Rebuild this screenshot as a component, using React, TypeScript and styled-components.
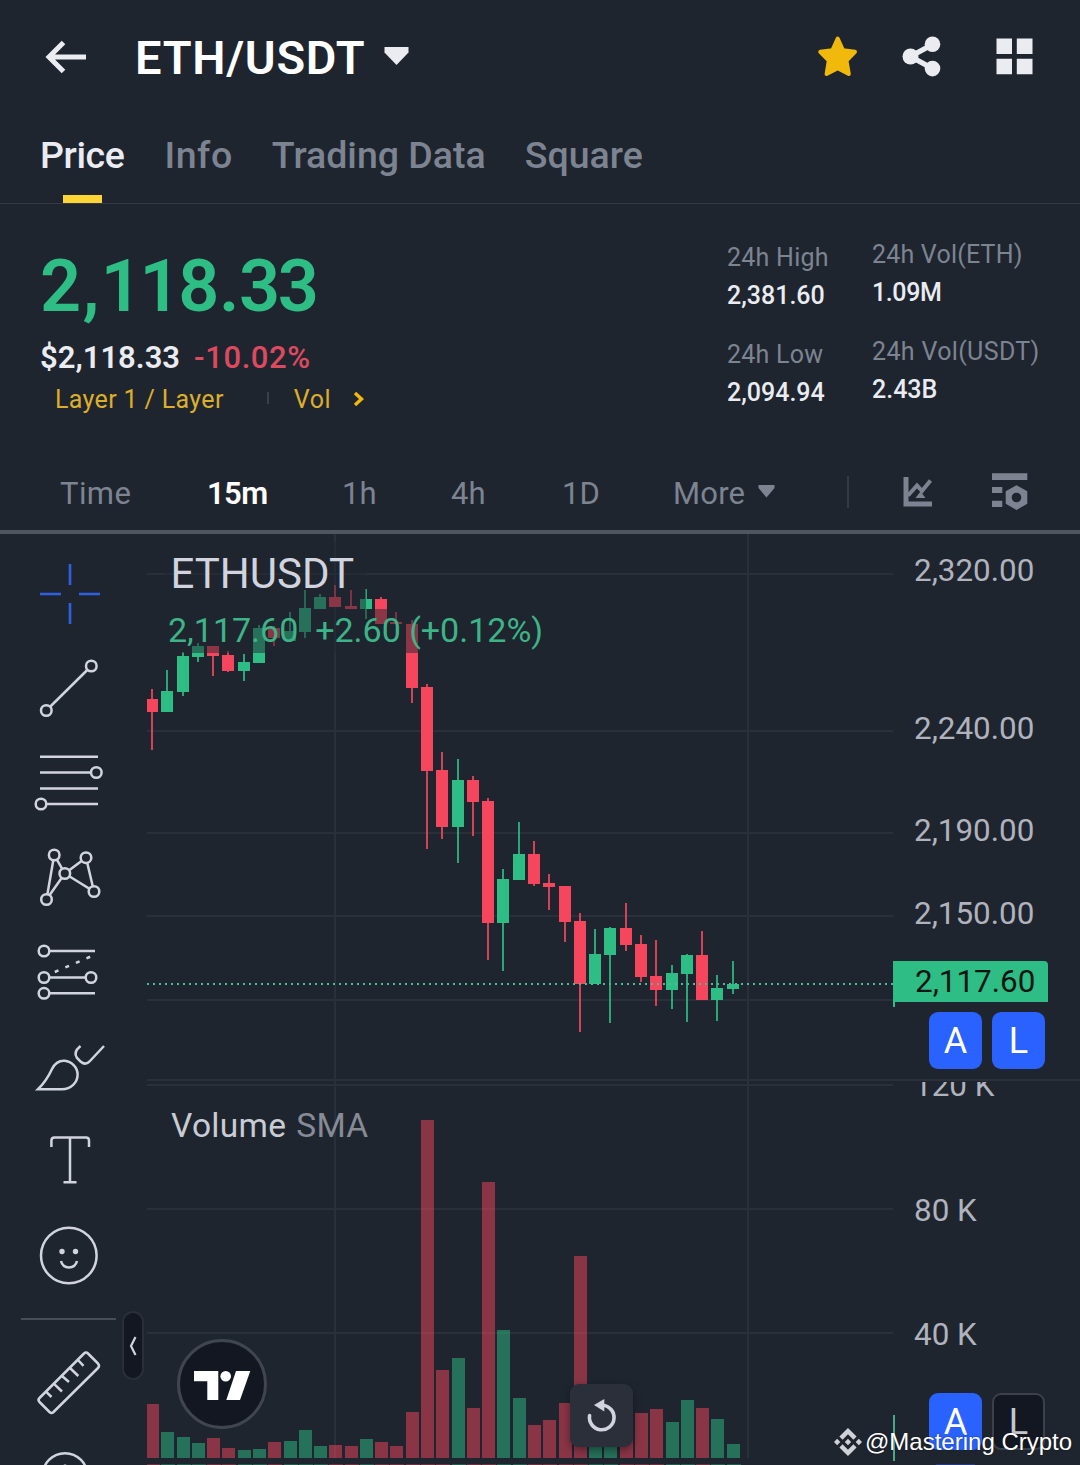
import React from "react";
import styled, { createGlobalStyle } from "styled-components";
import { SiBinance } from "react-icons/si";

const c = {
  bg: "#1f252f",
  text: "#eaecf2",
  muted: "#7d8491",
  green: "#2ebd85",
  red: "#f6465d",
  gold: "#dcae2b",
  line: "#2a3039",
  icon: "#d1d4de",
  ink: "#131722",
  blue: "#2962ff",
};

const GlobalStyle = createGlobalStyle`
  html, body { margin: 0; padding: 0; background: ${c.bg}; }
  * { box-sizing: border-box; }
`;

const Screen = styled.main`
  display: flex;
  flex-direction: column;
  width: 1080px;
  height: 1465px;
  overflow: hidden;
  background: ${c.bg};
  color: ${c.text};
  font-family: Roboto, "Liberation Sans", sans-serif;
  white-space: nowrap;
`;

/* ---------- header ---------- */

const Header = styled.header`
  display: flex;
  align-items: center;
  height: 114px;
  padding: 0 44px 0 44px;
`;

const Pair = styled.h1`
  margin: 2px 0 0 47px;
  font-size: 47px;
  font-weight: 600;
  line-height: 56px;
  letter-spacing: 0.7px;
  color: #fff;
`;

const HeaderCaret = styled.svg`
  margin: 0 0 2px 19px;
`;

const HeaderActions = styled.div`
  display: flex;
  align-items: center;
  margin: 0 0 2px auto;
`;

const ActionIcon = styled.svg<{ $gap?: number }>`
  margin-left: ${(p) => p.$gap ?? 0}px;
`;

const Tabs = styled.nav`
  display: flex;
  gap: 40px;
  height: 90px;
  padding: 17px 0 0 40px;
  border-bottom: 1px solid #343a45;
`;

const Tab = styled.span<{ $active?: boolean; $spacing?: number; $pull?: number }>`
  position: relative;
  font-size: 37.5px;
  line-height: 48px;
  font-weight: 500;
  letter-spacing: ${(p) => p.$spacing ?? 0}px;
  margin-left: ${(p) => p.$pull ?? 0}px;
  color: ${(p) => (p.$active ? c.text : c.muted)};
  &::after {
    content: "";
    display: ${(p) => (p.$active ? "block" : "none")};
    position: absolute;
    left: 23px;
    top: 64px;
    width: 39px;
    height: 8px;
    background: #fcd535;
  }
`;

/* ---------- price summary ---------- */

const Summary = styled.section`
  display: flex;
  height: 250px;
`;

const PriceColumn = styled.div`
  display: flex;
  flex-direction: column;
  width: 727px;
  padding: 41px 0 0 40px;
`;

const LastPrice = styled.div`
  font-size: 72px;
  font-weight: 600;
  line-height: 84px;
  letter-spacing: -2.4px;
  color: ${c.green};
`;

const Separator = styled.span`
  display: inline-block;
  width: 22px;
  text-align: center;
`;

const ChangeRow = styled.div`
  display: flex;
  gap: 14px;
  margin-top: 11px;
  font-size: 31px;
  line-height: 36px;
  font-weight: 600;
`;

const Change = styled.span`
  color: #dd4a5f;
  font-weight: 500;
  letter-spacing: 0.6px;
`;

const TagRow = styled.div`
  display: flex;
  align-items: center;
  margin-top: 9px;
  padding-left: 15px;
  font-size: 25px;
  line-height: 30px;
  color: ${c.gold};
`;

const Tag = styled.span<{ $spacing?: number }>`
  letter-spacing: ${(p) => p.$spacing ?? 0}px;
`;

const TagDivider = styled.i`
  width: 2px;
  height: 12px;
  margin: 0 25px 4px 43px;
  background: #3a404b;
`;

const TagChevron = styled.svg`
  margin: 0 0 3px 22px;
`;

const StatColumn = styled.div<{ $width: number; $top: number }>`
  display: flex;
  flex-direction: column;
  gap: 22px;
  width: ${(p) => p.$width}px;
  padding-top: ${(p) => p.$top}px;
`;

const Stat = styled.div`
  height: 75px;
`;

const StatLabel = styled.div<{ $spacing?: number }>`
  font-size: 25px;
  line-height: 30px;
  letter-spacing: ${(p) => p.$spacing ?? 0.25}px;
  color: ${c.muted};
`;

const StatValue = styled.div<{ $spacing?: number }>`
  margin-top: 8px;
  font-size: 25px;
  line-height: 30px;
  font-weight: 500;
  letter-spacing: ${(p) => p.$spacing ?? 0}px;
  color: ${c.text};
`;

/* ---------- interval bar ---------- */

const IntervalBar = styled.nav`
  display: grid;
  grid-template-columns: 147px 135px 109px 111px 111px 174px 56px 88px 40px;
  align-items: center;
  height: 80px;
  padding: 0 0 0 60px;
  border-bottom: 4px solid #515560;
`;

const Interval = styled.span<{ $active?: boolean; $spacing?: number }>`
  display: flex;
  align-items: center;
  gap: 13px;
  padding-top: 4px;
  font-size: 31px;
  line-height: 38px;
  font-weight: ${(p) => (p.$active ? 600 : 400)};
  letter-spacing: ${(p) => p.$spacing ?? 0.2}px;
  color: ${(p) => (p.$active ? "#fff" : c.muted)};
`;

const MoreCaret = styled.svg`
  margin-bottom: 6px;
`;

const BarDivider = styled.i`
  width: 2px;
  height: 32px;
  background: #343a45;
`;

/* ---------- chart ---------- */

const ChartArea = styled.section`
  display: grid;
  grid-template-columns: 147px 933px;
  height: 931px;
`;

const Toolbar = styled.aside`
  position: relative;
  display: flex;
  flex-direction: column;
  padding: 13px 0 0 21px;
  overflow: hidden;
`;

const ToolSvg = styled.svg`
  flex: none;
  width: 96px;
  height: 94.5px;
  fill: none;
  stroke: ${c.icon};
  stroke-width: 2.5;
`;

const ToolDivider = styled.hr`
  flex: none;
  width: 95px;
  height: 2px;
  margin: 15px 0 16px;
  border: 0;
  background: #474c56;
`;

const CollapseHandle = styled.button`
  position: absolute;
  left: 122px;
  top: 777px;
  display: flex;
  align-items: center;
  justify-content: center;
  width: 22px;
  height: 69px;
  padding: 0;
  border: 2px solid #292e38;
  border-radius: 11px;
  background: ${c.ink};
`;

const Plot = styled.div`
  position: relative;
  overflow: hidden;
`;

const ChartSvg = styled.svg`
  display: block;
  font-family: Roboto, "Liberation Sans", sans-serif;
`;

const SymbolLegend = styled.div`
  position: absolute;
  left: 16px;
  top: 8px;
  width: 203px;
  height: 67px;
  padding: 7px 0 0 7.5px;
  background: rgba(31, 37, 47, 0.5);
  color: #d1d4de;
  font-size: 42px;
  line-height: 50px;
`;

const QuoteLegend = styled.div`
  position: absolute;
  left: 16px;
  top: 75px;
  width: 386px;
  height: 44px;
  padding: 1px 0 0 5px;
  background: rgba(31, 37, 47, 0.5);
  color: #3db488;
  font-size: 34px;
  line-height: 40px;
  white-space: pre;
`;

const VolumeLegend = styled.div`
  position: absolute;
  left: 24px;
  top: 572px;
  display: flex;
  gap: 10px;
  font-size: 33.5px;
  line-height: 40px;
  letter-spacing: 0.3px;
  color: #c9ccd5;
`;

const Dim = styled.span`
  color: #868b96;
`;

const ScaleButtons = styled.div<{ $top: number }>`
  position: absolute;
  left: 782px;
  top: ${(p) => p.$top}px;
  display: flex;
  gap: 10px;
`;

const ScaleButton = styled.button<{ $off?: boolean }>`
  width: 53px;
  height: 57px;
  padding: 2px 0 0;
  border: ${(p) => (p.$off ? "2px solid #3b404b" : "0")};
  border-radius: 9px;
  background: ${(p) => (p.$off ? c.ink : c.blue)};
  color: ${(p) => (p.$off ? "#c3c6cf" : "#fff")};
  font: 400 36px / 51px Roboto, "Liberation Sans", sans-serif;
`;

const Badge = styled.div`
  position: absolute;
  left: 30px;
  top: 805px;
  width: 90px;
  height: 90px;
  border: 3px solid #41454f;
  border-radius: 50%;
  background: ${c.ink};
`;

const ResetButton = styled.button`
  position: absolute;
  left: 423px;
  top: 850px;
  width: 63px;
  height: 63px;
  padding: 0;
  border: 0;
  border-radius: 9px;
  background: #2a2f3a;
  box-shadow: 0 3px 8px rgba(0, 0, 0, 0.4);
`;

const Watermark = styled.div`
  position: absolute;
  left: 687px;
  top: 893px;
  display: flex;
  align-items: center;
  gap: 3px;
  color: #fff;
  font: 24px / 30px "Liberation Sans", Arial, sans-serif;
  text-shadow: 0 0 2px rgba(0, 0, 0, 0.5);
`;

type Candle = [up: 0 | 1, high: number, top: number, bottom: number, low: number, volume: number];

const candles: Candle[] = [
  [0, 689, 699, 712, 750, 1404],
  [1, 670, 691, 712, 712, 1432],
  [1, 652, 656, 692, 696, 1437],
  [1, 643, 646, 657, 662, 1443],
  [0, 646, 646, 656, 676, 1438],
  [0, 651, 655, 671, 672, 1448],
  [1, 654, 662, 671, 681, 1450],
  [1, 625, 628, 663, 663, 1449],
  [0, 626, 628, 638, 646, 1442],
  [1, 612, 631, 641, 641, 1441],
  [1, 590, 608, 632, 638, 1430],
  [1, 594, 597, 609, 609, 1446],
  [0, 585, 597, 607, 607, 1445],
  [0, 590, 606, 609, 609, 1446],
  [1, 589, 599, 609, 619, 1439],
  [0, 597, 599, 624, 624, 1442],
  [0, 612, 622, 624, 624, 1446],
  [0, 620, 624, 688, 703, 1412],
  [0, 684, 687, 771, 849, 1120],
  [0, 752, 770, 827, 839, 1370],
  [1, 759, 780, 827, 863, 1358],
  [0, 776, 780, 802, 836, 1408],
  [0, 798, 801, 923, 960, 1182],
  [1, 869, 879, 923, 971, 1330],
  [1, 822, 854, 880, 880, 1398],
  [0, 841, 854, 884, 886, 1425],
  [0, 874, 883, 887, 910, 1420],
  [0, 886, 886, 922, 942, 1403],
  [0, 913, 921, 984, 1032, 1256],
  [1, 929, 954, 984, 984, 1425],
  [1, 927, 928, 955, 1023, 1425],
  [0, 903, 928, 945, 951, 1425],
  [0, 935, 944, 977, 982, 1413],
  [0, 940, 976, 990, 1006, 1409],
  [1, 965, 973, 990, 1009, 1422],
  [1, 954, 955, 974, 1022, 1400],
  [0, 931, 955, 1000, 1000, 1408],
  [1, 975, 988, 1000, 1021, 1419],
  [1, 961, 984, 989, 994, 1444],
];

const centerOf = (i: number) => Math.round(152 + i * 15.28);

const axisLabels: [string, number][] = [
  ["2,320.00", 581],
  ["2,240.00", 739],
  ["2,190.00", 841],
  ["2,150.00", 924],
  ["80 K", 1221],
  ["40 K", 1345],
];

function Chart() {
  return (
    <ChartSvg width="933" height="931" viewBox="147 534 933 931">
      <defs>
        <clipPath id="volume-pane">
          <rect x="893" y="1082" width="187" height="383" />
        </clipPath>
      </defs>
      <g fill={c.line}>
        {[573, 730, 832, 915, 999, 1084, 1208, 1332].map((y) => (
          <rect key={y} x="147" y={y} width="746" height="2" />
        ))}
        <rect x="334" y="534" width="2" height="924" />
        <rect x="747" y="534" width="2" height="924" />
        <rect x="147" y="1079" width="933" height="2" />
      </g>
      {candles.map(([up, high, top, bottom, low, volume], i) => {
        const x = centerOf(i);
        const fill = up ? c.green : c.red;
        return (
          <g key={i} fill={fill}>
            <rect x={x - 6} y={volume} width="13" height={1458 - volume} opacity="0.5" />
            <rect x={x - 6} y="1464" width="14" height="1" opacity="0.35" />
            <rect x={x - 1} y={high} width="2" height={low - high} opacity="0.85" />
            <rect x={x - 6} y={top} width="12" height={bottom - top} />
          </g>
        );
      })}
      <line x1="147" x2="893" y1="984" y2="984" stroke="#4fb894" strokeWidth="2" strokeDasharray="2 4" />
      <g fill="#b0b3bd" fontSize="31.4">
        {axisLabels.map(([label, y]) => (
          <text key={label} x="914" y={y}>
            {label}
          </text>
        ))}
        <text x="914" y="1096" clipPath="url(#volume-pane)">
          120 K
        </text>
      </g>
      <path d="M893 961H1044a4 4 0 0 1 4 4V1002H895V1007H893Z" fill={c.green} />
      <text x="915" y="992" fontSize="31.4" fill="#0b1512">
        2,117.60
      </text>
      <rect x="893" y="1415" width="2" height="46" fill="#4aa882" />
      <rect x="936" y="1464" width="39" height="1" fill="#233a80" />
    </ChartSvg>
  );
}

const Node = ({ x, y }: { x: number; y: number }) => <circle cx={x} cy={y} r="5.3" fill={c.bg} />;

function Tools() {
  return (
    <Toolbar>
      <ToolSvg viewBox="21 547 96 94.5">
        <path d="M70 564V585M70 603V624M40 594H61M79 594H100" stroke="#2f60e4" strokeWidth="2.6" />
      </ToolSvg>
      <ToolSvg viewBox="21 641.5 96 94.5">
        <path d="M46.3 710L91.3 665.5" />
        <Node x={46.3} y={710} />
        <Node x={91.3} y={665.5} />
      </ToolSvg>
      <ToolSvg viewBox="21 736 96 94.5">
        <path d="M40 756.7H98M40 772.5H92M40 788.5H98M44 804H98" />
        <Node x={96.3} y={772.5} />
        <Node x={41} y={804} />
      </ToolSvg>
      <ToolSvg viewBox="21 830.5 96 94.5">
        <path d="M46.5 899L54.2 854.5L64.8 873L46.5 899M64.8 873L86 857.2L94 891Z" />
        <Node x={54.2} y={854.5} />
        <Node x={86} y={857.2} />
        <Node x={64.8} y={873} />
        <Node x={46.5} y={899} />
        <Node x={94} y={891} />
      </ToolSvg>
      <ToolSvg viewBox="21 925 96 94.5">
        <path d="M44 951H95M44 977.5H91M44 993.3H95" />
        <path d="M54.8 972L93 955.5" strokeDasharray="4 7.5" />
        <Node x={44} y={951} />
        <Node x={44} y={977.5} />
        <Node x={91} y={977.5} />
        <Node x={44} y={993.3} />
      </ToolSvg>
      <ToolSvg viewBox="21 1019.5 96 94.5">
        <path d="M38 1088.7C46 1081 49 1075 52 1068.5C55 1062.5 59.5 1060 64.5 1060.3C72 1061 77.6 1067 77.6 1074C77.6 1082 71 1088.7 62 1088.7Z" />
        <path d="M80.5 1045.5C75 1050 74 1053.5 77 1057.5L80.5 1061C84 1064 87 1064 90 1060.5L104 1045.5" />
      </ToolSvg>
      <ToolSvg viewBox="21 1114 96 94.5">
        <path d="M51.4 1147V1140.5Q51.4 1137.4 54.5 1137.4H86Q89 1137.4 89 1140.5V1147M70 1137.4V1182M63.5 1182.3H76.5" />
      </ToolSvg>
      <ToolSvg viewBox="21 1208.5 96 94.5">
        <circle cx="68.8" cy="1255" r="27.8" />
        <circle cx="62" cy="1251" r="2.7" fill={c.icon} stroke="none" />
        <circle cx="75.5" cy="1251" r="2.7" fill={c.icon} stroke="none" />
        <path d="M61 1260.5C63 1269 75 1269 77 1260.5" />
      </ToolSvg>
      <ToolDivider />
      <ToolSvg viewBox="21 1336 96 94.5">
        <path
          strokeLinejoin="round"
          d="M84 1353.5Q86 1351.5 88 1353.5L98 1363.5Q100 1365.8 98 1368L53.5 1412Q51.5 1414 49.5 1412L39.5 1402Q37.5 1400 39.5 1398ZM46 1391.7L51.5 1397M54 1383.8L62 1391.5M62 1376L69 1382M70 1368L78.3 1376M78 1360L83.5 1365.8"
        />
      </ToolSvg>
      <ToolSvg viewBox="21 1430.5 96 94.5">
        <circle cx="65" cy="1475" r="22.3" />
        <path d="M65 1464V1486M54 1475H76" />
      </ToolSvg>
      <CollapseHandle aria-label="Collapse toolbar">
        <svg width="10" height="22" viewBox="0 0 10 22" fill="none" stroke={c.icon} strokeWidth="2.2">
          <path d="M7.5 2L3 11L7.5 20" />
        </svg>
      </CollapseHandle>
    </Toolbar>
  );
}

export default function App() {
  return (
    <Screen>
      <GlobalStyle />
      <Header>
        <svg width="44" height="40" viewBox="44 37 44 40" fill="none" stroke={c.text} strokeWidth="5">
          <path d="M86 57H49M63.5 42.5L49 57L63.5 71.5" />
        </svg>
        <Pair>ETH/USDT</Pair>
        <HeaderCaret width="25" height="18" viewBox="0 0 25 18">
          <path d="M.5 0H24.5V5.5L12.5 18L.5 5.5Z" fill={c.text} />
        </HeaderCaret>
        <HeaderActions>
          <ActionIcon width="42" height="44" viewBox="816 34 42 44">
            <path
              d="M837.7 38.5L843 50.3L855 51.8L846.5 60.5L848.8 74L837.7 68.2L826.6 74L828.8 60.5L820.2 51.8L832.4 50.3Z"
              fill="#f0b90b"
              stroke="#f0b90b"
              strokeWidth="4"
              strokeLinejoin="round"
            />
          </ActionIcon>
          <ActionIcon $gap={43} width="42" height="42" viewBox="901 35 42 42" fill={c.text}>
            <path d="M932.5 44.5L910.5 56.5L932.5 68.5" fill="none" stroke={c.text} strokeWidth="5.4" />
            <circle cx="910.5" cy="56.5" r="8" />
            <circle cx="932.5" cy="44.3" r="7.8" />
            <circle cx="932.5" cy="68.6" r="7.8" />
          </ActionIcon>
          <ActionIcon $gap={51} width="42" height="42" viewBox="994 35 42 42" fill={c.text}>
            <path d="M996.5 38.5H1012V54H996.5ZM1016.8 38.5H1032.5V54H1016.8ZM996.5 58.8H1012V74.2H996.5ZM1016.8 58.8H1032.5V74.2H1016.8Z" />
          </ActionIcon>
        </HeaderActions>
      </Header>

      <Tabs>
        <Tab $active $spacing={-0.4}>
          Price
        </Tab>
        <Tab $spacing={0.6}>Info</Tab>
        <Tab $pull={-1}>Trading Data</Tab>
        <Tab $pull={-1}>Square</Tab>
      </Tabs>

      <Summary>
        <PriceColumn>
          <LastPrice>
            2<Separator>,</Separator>118<Separator>.</Separator>33
          </LastPrice>
          <ChangeRow>
            <span>$2,118.33</span>
            <Change>-10.02%</Change>
          </ChangeRow>
          <TagRow>
            <Tag $spacing={0.35}>Layer 1 / Layer</Tag>
            <TagDivider />
            <Tag $spacing={0.6}>Vol</Tag>
            <TagChevron width="12" height="16" viewBox="0 0 12 16" fill="none" stroke="#f0b90b" strokeWidth="3.4">
              <path d="M2 2L8.5 8L2 14" />
            </TagChevron>
          </TagRow>
        </PriceColumn>
        <StatColumn $width={145} $top={39}>
          <Stat>
            <StatLabel>24h High</StatLabel>
            <StatValue>2,381.60</StatValue>
          </Stat>
          <Stat>
            <StatLabel>24h Low</StatLabel>
            <StatValue>2,094.94</StatValue>
          </Stat>
        </StatColumn>
        <StatColumn $width={200} $top={36}>
          <Stat>
            <StatLabel $spacing={0.2}>24h Vol(ETH)</StatLabel>
            <StatValue $spacing={-0.4}>1.09M</StatValue>
          </Stat>
          <Stat>
            <StatLabel $spacing={0.35}>24h Vol(USDT)</StatLabel>
            <StatValue>2.43B</StatValue>
          </Stat>
        </StatColumn>
      </Summary>

      <IntervalBar>
        <Interval $spacing={0.4}>Time</Interval>
        <Interval $active $spacing={-0.6}>
          15m
        </Interval>
        <Interval>1h</Interval>
        <Interval>4h</Interval>
        <Interval>1D</Interval>
        <Interval>
          More
          <MoreCaret width="17" height="13" viewBox="0 0 17 13">
            <path d="M.5 0H16.5V3L8.5 12.5L.5 3Z" fill={c.muted} />
          </MoreCaret>
        </Interval>
        <BarDivider />
        <svg width="30" height="30" viewBox="903 475 30 30" fill="none" stroke={c.muted} strokeWidth="4.2">
          <path d="M906 475V502H932" strokeWidth="5" />
          <path d="M908 493.5L917 483.5L922 489L930.5 478.5" strokeWidth="4" />
          <path d="M920.5 489.5L925.5 496H915.5Z" fill={c.muted} stroke="none" />
        </svg>
        <svg width="38" height="38" viewBox="991 473 38 38" fill={c.muted}>
          <path d="M992 473.3H1027.3V480H992ZM992 487H1002.3V493H992ZM992 500.7H1002.3V507H992Z" />
          <path
            fillRule="evenodd"
            d="M1016.5 485.3L1027.3 491.3V503.8L1016.5 510L1005.7 503.8V491.3ZM1016.5 492.7A4.8 4.8 0 1 0 1016.5 502.3A4.8 4.8 0 1 0 1016.5 492.7Z"
          />
        </svg>
      </IntervalBar>

      <ChartArea>
        <Tools />
        <Plot>
          <Chart />
          <SymbolLegend>ETHUSDT</SymbolLegend>
          <QuoteLegend>2,117.60  +2.60 (+0.12%)</QuoteLegend>
          <VolumeLegend>
            <span>Volume</span>
            <Dim>SMA</Dim>
          </VolumeLegend>
          <ScaleButtons $top={478}>
            <ScaleButton>A</ScaleButton>
            <ScaleButton>L</ScaleButton>
          </ScaleButtons>
          <ScaleButtons $top={859}>
            <ScaleButton>A</ScaleButton>
            <ScaleButton $off>L</ScaleButton>
          </ScaleButtons>
          <Badge>
            <svg width="84" height="84" viewBox="180 1342 84 84" fill="#fff">
              <path d="M194 1371H218.3V1400H207.3V1381.3H194ZM236 1371H250.3L240 1400H226.3Z" />
              <circle cx="225.7" cy="1376.2" r="5.3" />
            </svg>
          </Badge>
          <ResetButton aria-label="Reset chart">
            <svg width="63" height="63" viewBox="570 1384 63 63">
              <path
                d="M589.6 1415.5A12.3 12.3 0 1 0 602.5 1405.2"
                fill="none"
                stroke={c.icon}
                strokeWidth="3.6"
                strokeLinecap="round"
              />
              <path d="M594 1405L604.3 1399V1411.5Z" fill={c.icon} />
            </svg>
          </ResetButton>
          <Watermark>
            <SiBinance size={28} color="#d0d2da" />
            <span>@Mastering Crypto</span>
          </Watermark>
        </Plot>
      </ChartArea>
    </Screen>
  );
}
